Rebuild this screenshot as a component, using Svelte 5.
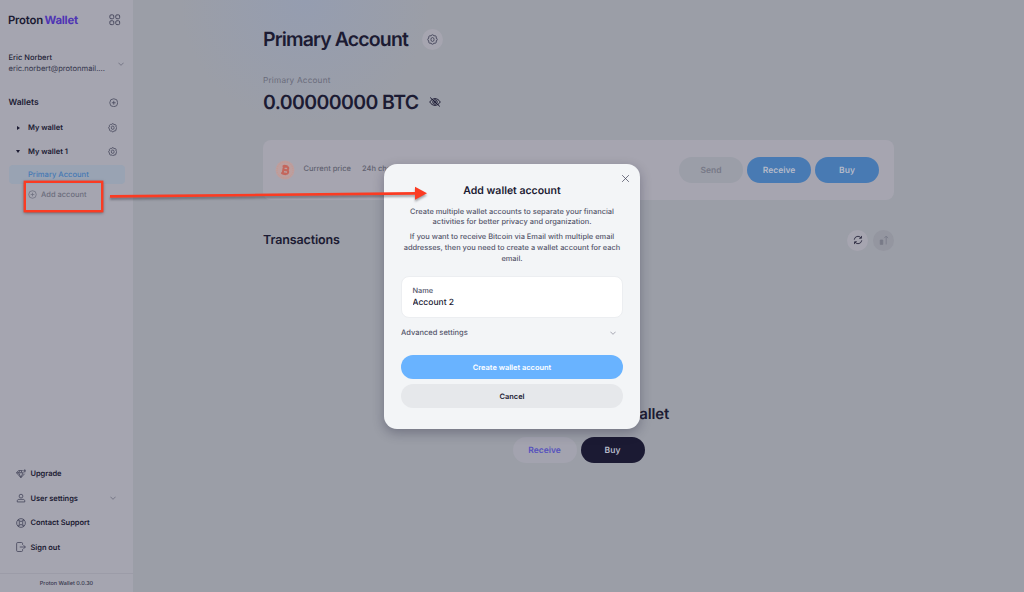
<script lang="ts">
	const wallets = [
		{ name: "My wallet", open: false },
		{ name: "My wallet 1", open: true },
	];

	const links = [
		{ label: "Upgrade", icon: "diamond" },
		{ label: "User settings", icon: "user", expandable: true },
		{ label: "Contact Support", icon: "support" },
		{ label: "Sign out", icon: "signout" },
	];

	let accountName = $state("Account 2");
	let modalOpen = $state(true);

	function closeModal() {
		modalOpen = false;
	}
</script>

{#snippet icon(name: string, size: number)}
	<svg class="icon" width={size} height={size} viewBox="0 0 16 16">
		{#if name === "gear"}
			<path d="M6.6 1.5Q8 .6 9.4 1.5l.7 1.4 1.6-.5q1.6.4 2 2l-.6 1.5 1.4.7q.9 1.4 0 2.8l-1.4.7.6 1.5q-.4 1.6-2 2l-1.6-.5-.7 1.4q-1.4.9-2.800 0l-.7-1.400-1.600.5q-1.600-.4-2-2l.6-1.500-1.400-.7q-.9-1.400 0-2.800l1.400-.7-.6-1.500q.4-1.600 2-2l1.600.5z" />
			<ellipse cx="8" cy="8" rx="2.3" ry="2.9" />
		{:else if name === "plus"}
			<circle cx="8" cy="8" r="6.7" />
			<path d="M8 4.8v6.4M4.8 8h6.4" />
		{:else if name === "grid"}
			<rect x="1.2" y="1.2" width="5.4" height="5.4" rx="1.6" />
			<rect x="9.4" y="1.2" width="5.4" height="5.4" rx="1.6" />
			<rect x="1.2" y="9.4" width="5.4" height="5.4" rx="1.6" />
			<rect x="9.4" y="9.4" width="5.4" height="5.4" rx="1.6" />
		{:else if name === "chevron"}
			<path d="M1 4.5l7 7 7-7" />
		{:else if name === "diamond"}
			<path d="M10.5 2.5H4L.8 6l7 8 6-6.5M.8 6H12M4.200 6l3.600 7.500L11.300 6M4.200 6l1.800-3.500M8 6l1.500-3.500M14 .5v5M11.500 3H16" />
		{:else if name === "user"}
			<circle cx="8" cy="5" r="3" />
			<path d="M2 14.3v-1.5c0-1.7 1.2-2.6 2.8-2.6h6.4c1.6 0 2.8.9 2.8 2.6v1.5z" />
		{:else if name === "support"}
			<circle cx="8" cy="8" r="7" />
			<circle cx="8" cy="8" r="3" />
			<path d="M3 3l2.3 3M4 2.2l2.6 2.4M13 3l-2.3 3M12 2.2L9.4 4.6M3 13l2.3-3M4 13.8l2.6-2.4M13 13l-2.3-3M12 13.8l-2.6-2.4" />
		{:else if name === "signout"}
			<path d="M10.5 4.5V2.5Q10.5.8 8.8.8H2.7Q1 .8 1 2.5v11q0 1.7 1.7 1.7h6.1q1.7 0 1.7-1.7v-2M6 8h9M12 5l3 3-3 3" />
		{:else if name === "eye-off"}
			<path d="M1 8c3.6-6 10.4-6 14 0-3.6 6-10.4 6-14 0z" />
			<circle cx="8" cy="8" r="3" />
			<circle cx="8" cy="8" r="1" />
			<path d="M1.5 2l13 12" />
		{:else if name === "refresh"}
			<path d="M2 7.5A6 6 0 0 1 12.8 4.5M14 8.5A6 6 0 0 1 3.2 11.5M13.5 1.5v3.7H9.8M2.5 14.5v-3.7h3.7" />
		{:else if name === "sort"}
			<path d="M11.5 15V2M8.5 5l3-3.3 3 3.3" />
			<path class="solid" d="M2 8h4v7H2z" />
		{:else if name === "cross"}
			<path d="M2 2l12 12M14 2L2 14" />
		{/if}
	</svg>
{/snippet}

<div class="app">
	<aside class="sidebar">
		<header class="brand">
			<span class="logo">Proton <b>Wallet</b></span>
			{@render icon("grid", 11.5)}
		</header>

		<button class="user">
			<span class="who">
				<span class="name">Eric Norbert</span>
				<span class="email">eric.norbert@protonmail....</span>
			</span>
			{@render icon("chevron", 6)}
		</button>

		<div class="section">
			<span>Wallets</span>
			{@render icon("plus", 9.5)}
		</div>

		{#each wallets as wallet}
			<div class="wallet">
				<span class="caret" class:open={wallet.open}></span>
				<span class="label">{wallet.name}</span>
				{@render icon("gear", 9.5)}
			</div>
		{/each}

		<div class="account">Primary Account</div>
		<button class="add">
			{@render icon("plus", 9)}
			<span>Add account</span>
		</button>

		<nav class="links">
			{#each links as link}
				<div class="link">
					{@render icon(link.icon, 10)}
					<span class="label">{link.label}</span>
					{#if link.expandable}
						{@render icon("chevron", 6)}
					{/if}
				</div>
			{/each}
		</nav>

		<footer class="version">Proton Wallet 0.0.30</footer>
	</aside>

	<main class="main">
		<div class="title">
			<h1>Primary Account</h1>
			<button class="round">{@render icon("gear", 11)}</button>
		</div>

		<p class="balance-label">Primary Account</p>
		<div class="balance">
			<span>0.00000000 BTC</span>
			{@render icon("eye-off", 12)}
		</div>

		<section class="card">
			<svg class="coin" width="20" height="20" viewBox="0 0 20 20">
				<circle cx="10" cy="10" r="9.5" fill="#bc9f9f" />
				<circle cx="10" cy="10" r="8" fill="none" stroke="#c5988f" stroke-dasharray="1 1" />
				<g fill="none" stroke="#c4665c" stroke-width="2" transform="rotate(10 10 10)">
					<path d="M7 6.5h4.2a1.7 1.7 0 0 1 0 3.5H8.3h3.4a1.8 1.8 0 0 1 0 3.6H6.8M8.3 6.5v7M9 5v1.5M11 5v1.5M9 13.5V15M11 13.5V15" />
				</g>
			</svg>
			<span class="stat">Current price</span>
			<span class="stat">24h change</span>
			<div class="actions">
				<button class="pill send">Send</button>
				<button class="pill blue">Receive</button>
				<button class="pill blue">Buy</button>
			</div>
		</section>

		<div class="transactions">
			<h2>Transactions</h2>
			<button class="round">{@render icon("refresh", 10)}</button>
			<button class="round off">{@render icon("sort", 10)}</button>
		</div>

		<section class="empty">
			<h3>Add bitcoin to your wallet</h3>
			<div class="actions">
				<button class="pill light">Receive</button>
				<button class="pill dark">Buy</button>
			</div>
		</section>
	</main>
</div>

{#if modalOpen}
	<div class="modal" role="dialog">
		<button class="close" onclick={closeModal}>{@render icon("cross", 9)}</button>
		<h2>Add wallet account</h2>
		<p>Create multiple wallet accounts to separate your financial<br />activities for better privacy and organization.</p>
		<p>If you want to receive Bitcoin via Email with multiple email<br />addresses, then you need to create a wallet account for each<br />email.</p>

		<label class="field">
			<span>Name</span>
			<input bind:value={accountName} />
		</label>

		<button class="advanced">
			<span>Advanced settings</span>
			{@render icon("chevron", 6)}
		</button>

		<button class="wide create">Create wallet account</button>
		<button class="wide cancel" onclick={closeModal}>Cancel</button>
	</div>
{/if}

<div class="highlight"></div>
<svg class="arrow" width="330" height="30" viewBox="0 0 330 30">
	<path d="M5 16.4L311 13.4" stroke="#fb3b22" stroke-width="2.6" />
	<path d="M310 6.8v13l12-6.5z" fill="#fb3b22" />
</svg>

<style>
	:global(body) {
		overflow: hidden;
		font-family: Inter, "Liberation Sans", sans-serif;
		color: #1c1b33;
		text-rendering: geometricPrecision;
	}

	button {
		padding: 0;
		border: 0;
		background: none;
		font: inherit;
		text-rendering: inherit;
		color: inherit;
		cursor: pointer;
	}

	h1,
	h2,
	h3,
	p {
		margin: 0;
	}

	.icon {
		display: block;
		flex: none;
		fill: none;
		stroke: currentColor;
		stroke-width: 1.3;
	}

	.icon .solid {
		fill: currentColor;
	}

	.app {
		display: flex;
		height: 592px;
	}

	.sidebar {
		display: flex;
		flex-direction: column;
		box-sizing: border-box;
		width: 133px;
		background: #a5a5b0;
		font-size: 7.5px;
		font-weight: 600;
		white-space: nowrap;
	}

	.sidebar .icon {
		color: #45465b;
	}

	.brand {
		display: flex;
		align-items: center;
		justify-content: space-between;
		height: 40px;
		padding: 0 12.5px 0 8px;
	}

	.logo {
		font-size: 11.4px;
		font-weight: 600;
		letter-spacing: -0.25px;
	}

	.logo b {
		margin-left: -1px;
		font-weight: 700;
		color: #4f35b4;
	}

	.user {
		display: flex;
		align-items: center;
		justify-content: space-between;
		height: 22px;
		margin-top: 12.5px;
		padding: 0 9px 0 8.5px;
		text-align: left;
	}

	.who {
		display: flex;
		flex-direction: column;
		line-height: 10.5px;
	}

	.who .name {
		font-weight: 500;
	}

	.who .email {
		font-size: 7.6px;
		font-weight: 400;
		color: #36374d;
	}

	.section {
		display: flex;
		align-items: center;
		justify-content: space-between;
		height: 24px;
		margin-top: 16px;
		padding: 0 15px 0 8.5px;
		font-size: 8.5px;
	}

	.wallet {
		display: flex;
		align-items: center;
		height: 23.5px;
		padding: 0 16px 0 16px;
	}

	.section + .wallet {
		margin-top: 1.5px;
	}

	.label {
		flex: 1;
	}

	.caret {
		width: 12px;
	}

	.caret::before {
		content: "";
		display: block;
		width: 0;
		margin-left: 1px;
		border: 2px solid transparent;
		border-left: 3px solid #1c1b33;
		border-right: 0;
	}

	.caret.open::before {
		margin-left: 0;
		border: 2.5px solid transparent;
		border-top: 3px solid #1c1b33;
		border-bottom: 0;
	}

	.account {
		height: 19px;
		margin: 2px 8px 0 9px;
		padding-left: 19px;
		border-radius: 4px;
		background: #99a3b3;
		font-size: 7.6px;
		font-weight: 500;
		line-height: 19px;
		color: #4679b4;
	}

	.add {
		display: flex;
		align-items: center;
		gap: 4px;
		height: 21px;
		padding-left: 28px;
		font-weight: 500;
		color: #6c6d7d;
	}

	.add .icon {
		color: #6c6d7d;
	}

	.links {
		margin-top: auto;
	}

	.link {
		display: flex;
		align-items: center;
		gap: 5px;
		height: 24.5px;
		padding: 0 17.5px 0 15.5px;
	}

	.link .label {
		letter-spacing: -0.04px;
	}

	.version {
		height: 18px;
		margin-top: 13.5px;
		border-top: 1px solid #9c9ca8;
		font-size: 5.5px;
		font-weight: 500;
		line-height: 21px;
		text-align: center;
		color: #36374d;
	}

	.main {
		flex: 1;
		padding: 26px 130px 0;
		background:
			radial-gradient(circle at 172px 0, #959db0 0, transparent 125px),
			#9b9ea7;
	}

	.title {
		display: flex;
		align-items: center;
		gap: 13px;
		height: 26px;
	}

	h1 {
		width: 145.5px;
		font-size: 19.5px;
		font-weight: 600;
		letter-spacing: -0.87px;
		white-space: nowrap;
	}

	.round {
		display: grid;
		place-content: center;
		width: 21px;
		height: 21px;
		border-radius: 50%;
		background: #a6a5b0;
	}

	.round.off {
		background: #9496a0;
		color: #787a87;
	}

	.title .round {
		color: #45465b;
	}

	.balance-label {
		margin-top: 23px;
		font-size: 8.2px;
		line-height: 11px;
		letter-spacing: 0.2px;
		color: #696b7a;
	}

	.balance {
		display: flex;
		align-items: center;
		gap: 10.5px;
		height: 26px;
		margin-top: 3px;
		font-size: 19.5px;
		font-weight: 600;
		letter-spacing: -0.62px;
	}

	.card {
		display: flex;
		align-items: center;
		box-sizing: border-box;
		height: 60px;
		margin-top: 25px;
		padding: 0 15px 0 12px;
		border-radius: 8px;
		background: #a6a5b0;
	}

	.stat {
		margin: -3px 2.5px 0 8.5px;
		font-size: 7.5px;
		font-weight: 500;
		color: #60616f;
	}

	.actions {
		display: flex;
		gap: 4px;
	}

	.card .actions {
		margin-left: auto;
	}

	.pill {
		width: 64px;
		height: 26px;
		padding-top: 1px;
		border-radius: 13px;
		font-size: 8.5px;
		font-weight: 600;
		color: #b6bac9;
	}

	.send {
		background: #9b9ea8;
		color: #777987;
	}

	.blue {
		background: #487ab3;
	}

	.light {
		background: #a3a3af;
		color: #5551bd;
	}

	.dark {
		background: #1b1a33;
	}

	.transactions {
		display: flex;
		align-items: center;
		gap: 5px;
		height: 22px;
		margin-top: 29px;
	}

	.transactions h2 {
		flex: 1;
		font-size: 12.5px;
		font-weight: 600;
		letter-spacing: -0.13px;
	}

	.empty {
		display: flex;
		flex-direction: column;
		align-items: center;
		gap: 14px;
		margin-top: 154px;
	}

	.empty h3 {
		font-size: 15px;
		font-weight: 600;
		line-height: 18px;
		letter-spacing: -0.1px;
	}

	.modal {
		position: absolute;
		top: 164px;
		left: 384px;
		box-sizing: border-box;
		width: 256px;
		height: 265px;
		padding: 19px 17px 0;
		border-radius: 13px;
		background: #f3f5f7;
		box-shadow: 0 4px 12px rgba(20, 20, 45, 0.3);
		text-align: center;
	}

	.close {
		position: absolute;
		top: 10px;
		right: 10.5px;
		color: #45465b;
	}

	.modal h2 {
		margin-bottom: 8.5px;
		font-size: 10.5px;
		font-weight: 600;
		line-height: 15px;
	}

	.modal p {
		margin: 0 -10px 4.5px;
		font-size: 7.45px;
		font-weight: 500;
		line-height: 10.7px;
		white-space: nowrap;
		color: #55566b;
	}

	.field {
		display: flex;
		flex-direction: column;
		box-sizing: border-box;
		height: 42px;
		margin-top: 11.5px;
		padding: 8px 10.5px;
		border: 1px solid #eceef1;
		border-radius: 8px;
		background: #fff;
		text-align: left;
	}

	.field span {
		font-size: 7.4px;
		font-weight: 500;
		line-height: 11px;
		color: #55566b;
	}

	.field input {
		height: 13px;
		padding: 1px 0 0;
		border: 0;
		outline: 0;
		font: 500 8.5px Inter, sans-serif;
		text-rendering: inherit;
		color: #1c1b33;
	}

	.advanced {
		display: flex;
		align-items: center;
		justify-content: space-between;
		width: 100%;
		height: 12px;
		margin: 8.5px 0 16px;
		padding-right: 7px;
		font-size: 7.5px;
		font-weight: 500;
		color: #55566b;
	}

	.wide {
		display: block;
		width: 222px;
		height: 24.5px;
		margin-bottom: 4.5px;
		padding-top: 1px;
		border-radius: 13px;
		font-size: 7.45px;
		font-weight: 600;
	}

	.create {
		background: #69b3ff;
		color: #fff;
	}

	.cancel {
		background: #e6e8eb;
	}

	/* annotation over the page */
	.highlight {
		position: absolute;
		top: 181px;
		left: 24px;
		box-sizing: border-box;
		width: 79px;
		height: 31px;
		border: 2px solid #fb3b22;
		box-shadow:
			0 0 0 0.4px #fb3b22,
			0 1px 3px rgba(30, 30, 40, 0.5);
	}

	.arrow {
		position: absolute;
		top: 180px;
		left: 105px;
		filter: drop-shadow(0 2px 1px rgba(30, 30, 40, 0.4));
	}
</style>
